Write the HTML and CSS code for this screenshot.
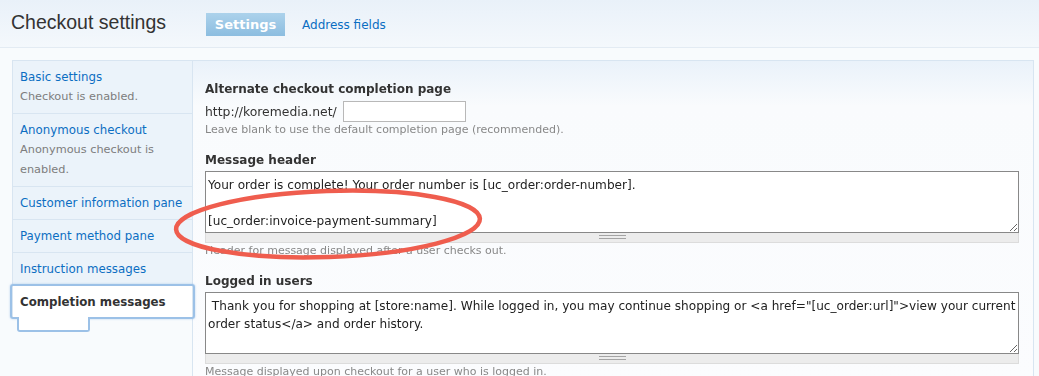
FILE: index.html
```html
<!DOCTYPE html>
<html lang="en">
<head>
    <meta charset="UTF-8">
    <title>Checkout settings</title>
    <link rel="stylesheet" href="styles.css">
</head>
<body>
    <div class="page-header">
        <h1>Checkout settings</h1>
        <ul class="tabs">
            <li class="active"><a href="#">Settings</a></li>
            <li><a href="#">Address fields</a></li>
        </ul>
    </div>

    <div class="settings">
        <ul class="vertical-tabs">
            <li>
                <a href="#">Basic settings</a>
                <span class="summary">Checkout is enabled.</span>
            </li>
            <li>
                <a href="#">Anonymous checkout</a>
                <span class="summary">Anonymous checkout is enabled.</span>
            </li>
            <li><a href="#">Customer information pane</a></li>
            <li><a href="#">Payment method pane</a></li>
            <li><a href="#">Instruction messages</a></li>
            <li class="selected"><a href="#">Completion messages</a></li>
        </ul>

        <div class="panel">
            <div class="form-item">
                <label>Alternate checkout completion page</label>
                <div class="field-prefix">
                    http://koremedia.net/ <input type="text" class="form-text">
                </div>
                <div class="description">Leave blank to use the default completion page (recommended).</div>
            </div>

            <div class="form-item">
                <label>Message header</label>
                <div class="resizable">
                    <textarea rows="3">Your order is complete! Your order number is [uc_order:order-number].

[uc_order:invoice-payment-summary]</textarea>
                    <div class="grippie"></div>
                </div>
                <div class="description">Header for message displayed after a user checks out.</div>
            </div>

            <div class="form-item">
                <label>Logged in users</label>
                <div class="resizable">
                    <textarea rows="3"> Thank you for shopping at [store:name]. While logged in, you may continue shopping or &lt;a href="[uc_order:url]"&gt;view your current order status&lt;/a&gt; and order history.</textarea>
                    <div class="grippie"></div>
                </div>
                <div class="description">Message displayed upon checkout for a user who is logged in.</div>
            </div>
        </div>
    </div>

    <!-- annotation drawn over the screenshot -->
    <svg class="callout" width="330" height="90" viewBox="0 0 330 90">
        <ellipse cx="160" cy="42" rx="152" ry="33" transform="rotate(-2 160 42)"
                 fill="none" stroke="#ef5d4e" stroke-width="4.5"/>
    </svg>
</body>
</html>
```

FILE: styles.css
```css
body {
    margin: 0;
    font-family: "DejaVu Sans", Verdana, sans-serif;
    font-size: 12px;
    color: #333;
    background-color: #f8fbfd;
    position: relative;
}

a {
    color: #0b6ec2;
    text-decoration: none;
}

.page-header {
    display: flex;
    align-items: center;
    height: 47px;
    padding-left: 11px;
    background: linear-gradient(#e9f1f9, #f4f8fc);
    border-bottom: 1px solid #e3ebf3;
}

h1 {
    margin: 0 40px 2px 0;
    font-family: "Liberation Sans", Arial, sans-serif;
    font-size: 19.5px;
    font-weight: normal;
    color: #333;
}

.tabs {
    display: flex;
    align-items: center;
    gap: 17px;
    margin: 2px 0 0;
    padding: 0;
    list-style: none;
}

.tabs a {
    display: block;
    font-size: 12px;
}

.tabs .active a {
    width: 79px;
    height: 23px;
    line-height: 23px;
    text-align: center;
    font-size: 13px;
    font-weight: bold;
    color: #fff;
    background: linear-gradient(#acd2eb, #8cbde0);
}

.settings {
    display: flex;
    margin: 12px 5px 0 12px;
}

.vertical-tabs {
    width: 180px;
    margin: 0;
    padding: 0;
    list-style: none;
    flex-shrink: 0;
}

.vertical-tabs li {
    padding: 6px 2px 6px 7px;
    line-height: 20px;
    background-color: #ebf3fa;
    border-left: 1px solid #d8e5f1;
    border-bottom: 1px solid #d8e5f1;
}

.vertical-tabs li:first-child {
    border-top: 1px solid #d8e5f1;
}

.vertical-tabs a {
    display: block;
    font-size: 11.8px;
    white-space: nowrap;
}

.vertical-tabs .summary {
    display: block;
    font-size: 11.3px;
    color: #7d7d7d;
}

.vertical-tabs li.selected {
    position: relative;
    background-color: #fff;
    border-bottom-color: #e2ebf3;
}

.vertical-tabs li.selected a {
    color: #333;
    font-weight: bold;
}

.vertical-tabs li.selected::before {
    content: "";
    position: absolute;
    left: -3px;
    right: -3px;
    top: -2px;
    bottom: -1px;
    border: 2px solid #9cc1e7;
    border-radius: 3px;
    box-shadow: 0 0 2px rgba(120, 170, 225, 0.6);
}

.vertical-tabs li.selected::after {
    content: "";
    position: absolute;
    left: 4px;
    width: 69px;
    top: calc(100% - 1px);
    height: 13px;
    background-color: #fff;
    border: 2px solid #9cc1e7;
    border-top: none;
    border-radius: 0 0 3px 3px;
}

.panel {
    flex: 1;
    min-height: 303px;
    padding: 19px 12px 0;
    background: linear-gradient(#eaf2fa, #f9fbfd 45px, #fbfcfe);
    border: 1px solid #d8e5f1;
    border-bottom: none;
}

.form-item {
    margin-bottom: 14px;
}

.form-item:last-child {
    margin-bottom: 0;
}

.form-item label {
    display: block;
    font-weight: bold;
    line-height: 18px;
    font-size: 12px;
}

.field-prefix {
    display: flex;
    align-items: center;
    gap: 6px;
    margin-top: 3px;
    font-size: 12.4px;
}

.form-text {
    width: 117px;
    height: 19px;
    padding: 0 2px;
    margin: 0;
    border: 1px solid #b8b8b8;
    background-color: #fff;
}

.description {
    margin-top: 1px;
    font-size: 11px;
    line-height: 14px;
    color: #888;
}

.resizable {
    width: 814px;
    margin-top: 2px;
}

.resizable textarea {
    display: block;
    box-sizing: border-box;
    width: 100%;
    height: 62px;
    margin: 0;
    padding: 4px 2px;
    font-family: "DejaVu Sans", Verdana, sans-serif;
    font-size: 12.1px;
    line-height: 18px;
    color: #222;
    border: 1px solid #888;
    resize: vertical;
}

.grippie {
    position: relative;
    height: 9px;
    background-color: #ececec;
    border: 1px solid #dcdcdc;
    border-top: none;
}

.grippie::after {
    content: "";
    position: absolute;
    left: 393px;
    top: 2px;
    width: 27px;
    height: 2px;
    border-top: 1px solid #a4a4a4;
    border-bottom: 1px solid #a4a4a4;
}

.callout {
    position: absolute;
    left: 168px;
    top: 182px;
}
```
